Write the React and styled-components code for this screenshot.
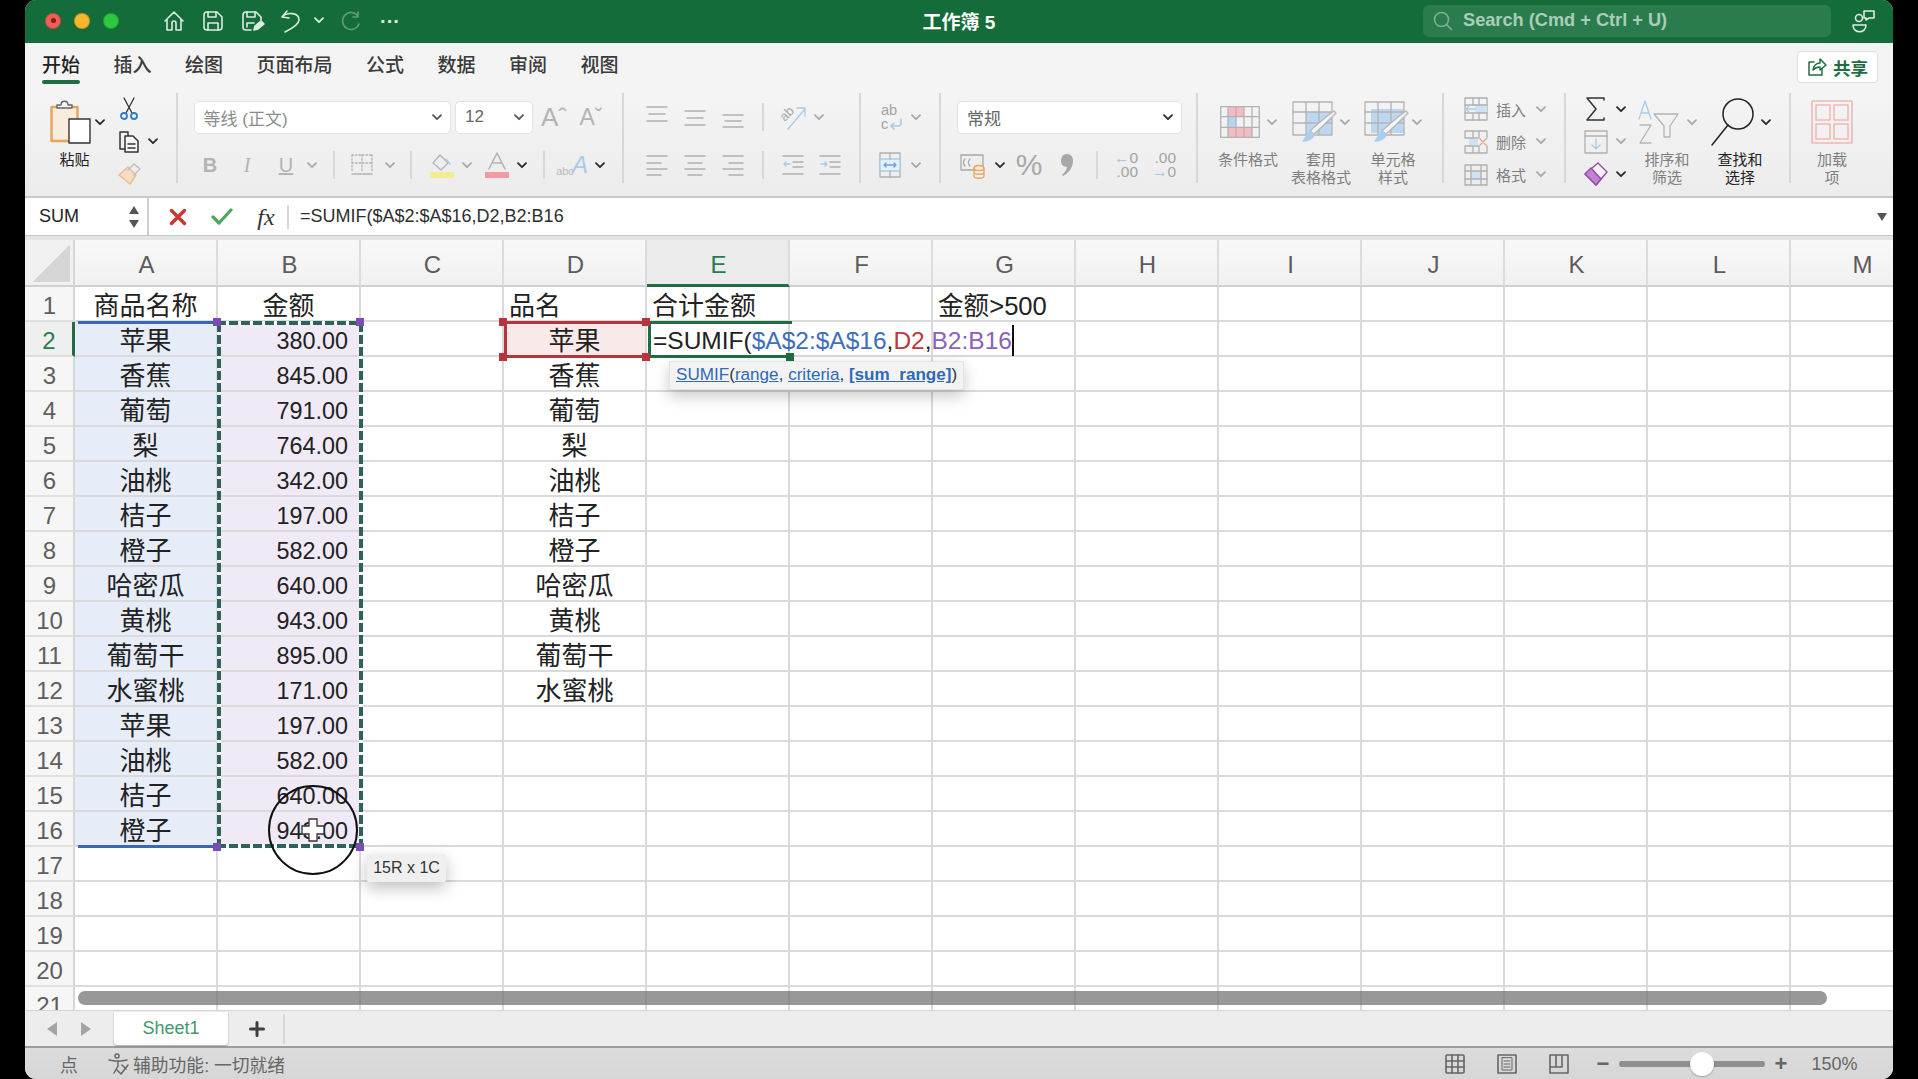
import React from "react";
import styled, { createGlobalStyle } from "styled-components";

const GlobalStyle = createGlobalStyle`
  html, body {
    margin: 0;
    background: #000;
    overflow: hidden;
    font-family: "Liberation Sans", "Noto Sans CJK SC", sans-serif;
  }
`;

const GREEN = "#1f6e43";
const GREY = "#b4b4b4";
const SOFTBLUE = "#a9cbe8";

const Window = styled.div`
  width: 1868px;
  height: 1079px;
  margin: 0 25px;
  border-radius: 11px;
  overflow: hidden;
  display: flex;
  flex-direction: column;
  background: #eee;
`;

const TitleBar = styled.div`
  height: 43px;
  flex: none;
  box-sizing: border-box;
  padding-bottom: 2px;
  background: #146c3a;
  color: #dcebe2;
  display: flex;
  align-items: center;
`;

const StripRow = styled.div`
  display: flex;
  align-items: center;
  height: 100%;
`;

const Slot = styled.div`
  flex: none;
  width: ${(p) => p.$w}px;
  margin-left: ${(p) => p.$ml}px;
  display: flex;
  align-items: center;
  justify-content: center;
`;

const Light = styled.span`
  width: 16px;
  height: 16px;
  border-radius: 50%;
  background: ${(p) => p.$c};
  border: 1px solid rgba(0, 0, 0, 0.18);
  box-sizing: border-box;
  display: flex;
  align-items: center;
  justify-content: center;
  &::after {
    content: "";
    width: 5px;
    height: 5px;
    border-radius: 50%;
    background: ${(p) => p.$dot || "transparent"};
  }
`;

const WindowTitle = styled.div`
  color: #fff;
  font-size: 19px;
  font-weight: 700;
  white-space: nowrap;
`;

const SearchBox = styled.div`
  width: 100%;
  height: 32px;
  border-radius: 6px;
  background: #2a7c4e;
  color: #a9cdb8;
  font-size: 18.2px;
  font-weight: 700;
  display: flex;
  align-items: center;
  gap: 10px;
  padding-left: 10px;
  box-sizing: border-box;
  white-space: nowrap;
`;

const TabRow = styled.div`
  height: 50px;
  flex: none;
  background: linear-gradient(#f3f3f3, #f4f4f4);
  display: flex;
  align-items: flex-start;
  gap: 33.5px;
  padding-left: 17px;
`;

const Tab = styled.div`
  position: relative;
  height: 44px;
  line-height: 46px;
  font-size: 19px;
  font-weight: 500;
  color: ${(p) => (p.$active ? "#222" : "#3a3a3a")};
  white-space: nowrap;
  ${(p) =>
    p.$active &&
    `&::after {
      content: "";
      position: absolute;
      left: 0;
      right: 0;
      top: 37px;
      height: 4px;
      border-radius: 2px;
      background: ${GREEN};
    }`}
`;

const ShareButton = styled.div`
  margin: 8px 15px 0 auto;
  width: 81px;
  height: 32px;
  background: #fff;
  border: 1px solid #dedede;
  border-radius: 4px;
  box-sizing: border-box;
  color: ${GREEN};
  font-size: 17.5px;
  font-weight: 700;
  display: flex;
  align-items: center;
  justify-content: center;
  gap: 6px;
`;

const Ribbon = styled.div`
  height: 105px;
  flex: none;
  box-sizing: border-box;
  background: linear-gradient(#f4f4f4, #ececec);
  border-bottom: 2px solid #c9c9c9;
  display: flex;
  align-items: flex-start;
`;

const Group = styled.div`
  flex: none;
  box-sizing: border-box;
  width: ${(p) => p.$w}px;
  height: 90px;
  border-right: ${(p) => (p.$last ? "none" : "2px solid #d8d8d8")};
  display: flex;
`;

const TwoRows = styled.div`
  display: grid;
  grid-template-rows: 48px 42px;
  width: 100%;
  & > div:last-child {
    box-sizing: border-box;
    padding-top: 6px;
  }
`;

const ThreeRows = styled.div`
  display: grid;
  grid-template-rows: 32px 33px 32px;
  flex: none;
  width: ${(p) => p.$w || "100%"};
`;

const BigTool = styled.div`
  flex: none;
  width: ${(p) => p.$w || 66}px;
  margin-left: ${(p) => p.$ml || 0}px;
  display: flex;
  flex-direction: column;
  align-items: center;
`;

const BigIcon = styled.div`
  height: 58px;
  flex: none;
  display: flex;
  align-items: center;
  gap: ${(p) => p.$gap || 7}px;
`;

const BigLabel = styled.div`
  font-size: 15px;
  line-height: 17.5px;
  text-align: center;
  white-space: nowrap;
  color: ${(p) => (p.$dark ? "#222" : "#7f7f7f")};
`;

const SmallLabel = styled.span`
  font-size: 15px;
  color: #7f7f7f;
  white-space: nowrap;
`;

const PasteBlock = styled.div`
  flex: none;
  width: 55px;
  margin-left: 25px;
  display: flex;
  flex-direction: column;
  & > ${BigLabel} {
    width: 49px;
  }
`;

const SelectBox = styled.div`
  width: 100%;
  height: 33px;
  box-sizing: border-box;
  background: #fff;
  border: 1px solid #e2e2e2;
  border-radius: 5px;
  padding: 0 8px 0 9px;
  display: flex;
  align-items: center;
  justify-content: space-between;
  font-size: 17px;
  color: ${(p) => p.$c || "#8c8c8c"};
  white-space: nowrap;
`;

const VBar = styled.span`
  width: 2px;
  height: ${(p) => p.$h || 28}px;
  background: #d8d8d8;
`;

const Glyph = styled.span`
  font-family: ${(p) => p.$serif ? '"Liberation Serif", serif' : '"Liberation Sans", sans-serif'};
  font-size: ${(p) => p.$s}px;
  font-weight: ${(p) => p.$b || 400};
  font-style: ${(p) => (p.$i ? "italic" : "normal")};
  text-decoration: ${(p) => (p.$u ? "underline" : "none")};
  color: ${(p) => p.$c || GREY};
  line-height: 1;
  white-space: nowrap;
`;

const DecimalStack = styled.span`
  display: flex;
  flex-direction: column;
  align-items: flex-end;
  font-size: 15.5px;
  line-height: 14px;
  color: #a4a4a4;
  white-space: nowrap;
  & b {
    font-weight: 400;
    color: #9cc2e4;
  }
`;

const AbcGlyph = styled.span`
  display: flex;
  align-items: flex-end;
  font-size: 11px;
  color: #b8b8b8;
  line-height: 1;
  & i {
    font-size: 24px;
    color: ${SOFTBLUE};
    margin-left: -2px;
  }
`;

const WrapGlyph = styled.span`
  display: flex;
  flex-direction: column;
  font-size: 14.5px;
  line-height: 14px;
  color: #a4a4a4;
  & > span {
    display: flex;
    align-items: center;
    gap: 1px;
  }
`;

const FormulaBar = styled.div`
  height: 37px;
  flex: none;
  background: #fff;
  display: flex;
  align-items: center;
  font-size: 18px;
  color: #2e2e2e;
`;

const NameBox = styled.div`
  width: 100%;
  display: flex;
  align-items: center;
  justify-content: space-between;
  padding: 0 7px 0 14px;
  box-sizing: border-box;
  height: 37px;
  border-right: 2px solid #cfcfcf;
  color: #222;
`;

const LineText = styled.span`
  width: 100%;
  white-space: nowrap;
  text-align: left;
`;

const GridGap = styled.div`
  height: 5px;
  flex: none;
  background: #e4e4e4;
  border-top: 1px solid #c6c6c6;
  box-sizing: border-box;
`;

const SheetView = styled.div`
  position: relative;
  height: 770px;
  flex: none;
  overflow: hidden;
  background: #fff;
`;

const SheetGrid = styled.div`
  display: grid;
  grid-template-columns: 50px repeat(13, 143px);
  grid-template-rows: 47px repeat(21, 35px);
  width: 1909px;
`;

const Corner = styled.div`
  background: #f1f1f1;
  border-right: 2px solid #d6d6d6;
  border-bottom: 2px solid #d0d0d0;
  box-sizing: border-box;
  display: flex;
  align-items: flex-end;
  justify-content: flex-end;
  padding: 0 3px 3px 0;
  &::after {
    content: "";
    width: 38px;
    height: 37px;
    background: linear-gradient(135deg, transparent 50%, #d6d6d6 50%);
  }
`;

const ColHead = styled.div`
  background: ${(p) => (p.$on ? "#ebebeb" : "linear-gradient(#f8f8f8, #f1f1f1)")};
  border-right: 2px solid #dcdcdc;
  border-bottom: ${(p) => (p.$on ? `3px solid ${GREEN}` : "2px solid #d0d0d0")};
  box-sizing: border-box;
  color: ${(p) => (p.$on ? "#2c7a52" : "#5c5c5c")};
  font-size: 24px;
  padding: 5px 0 0 2px;
  display: flex;
  align-items: center;
  justify-content: center;
`;

const RowHead = styled.div`
  background: ${(p) => (p.$on ? "#efefef" : "#f6f6f6")};
  border-right: ${(p) => (p.$on ? `3px solid ${GREEN}` : "2px solid #d6d6d6")};
  border-bottom: 2px solid #e0e0e0;
  box-sizing: border-box;
  color: ${(p) => (p.$on ? "#2c7a52" : "#5e5e5e")};
  font-size: 24px;
  padding: 4px 0 0 1px;
  display: flex;
  align-items: center;
  justify-content: center;
`;

const Cell = styled.div`
  background: ${(p) => p.$bg || "#fff"};
  border-right: 2px solid #dadada;
  border-bottom: 2px solid #dadada;
  box-sizing: border-box;
  font-size: ${(p) => p.$size || 26}px;
  font-weight: 400;
  color: #222;
  white-space: nowrap;
  padding: ${(p) => (p.$align === "flex-end" ? "6px 11px 0" : "0 5px 1px")};
  display: flex;
  align-items: center;
  justify-content: ${(p) => p.$align || "center"};
`;

const FormulaInput = styled.span`
  font-size: 24.5px;
  position: relative;
  z-index: 3;
  margin: 5px 0 0 1px;
  border-right: 2px solid #111;
  line-height: 31px;
  height: 31px;
  display: inline-block;
`;

const Ref = styled.span`
  color: ${(p) => p.$c};
`;

/* selection decorations that sit over the cells */
const Overlay = styled.div`
  position: absolute;
  left: ${(p) => p.$x}px;
  top: ${(p) => p.$y}px;
  width: ${(p) => p.$w}px;
  height: ${(p) => p.$h}px;
  box-sizing: border-box;
  pointer-events: none;
`;

const DASH = "#2d6358 0 9px, #fff 9px 12px";

const DashedRange = styled(Overlay)`
  background:
    repeating-linear-gradient(90deg, ${DASH}) top / 100% 4px no-repeat,
    repeating-linear-gradient(90deg, ${DASH}) bottom / 100% 4px no-repeat,
    repeating-linear-gradient(0deg, ${DASH}) left / 4px 100% no-repeat,
    repeating-linear-gradient(0deg, ${DASH}) right / 4px 100% no-repeat;
`;

const BlueRange = styled(Overlay)`
  border-top: 3px solid #3c66b6;
  border-bottom: 3px solid #3c66b6;
`;

const RedRange = styled(Overlay)`
  border: 3px solid #b5353f;
  border-right: none;
`;

const ActiveCell = styled(Overlay)`
  border-left: 3px solid ${GREEN};
  border-top: 3px solid ${GREEN};
  border-bottom: 3px solid ${GREEN};
`;

const Handle = styled(Overlay)`
  background: ${(p) => p.$c};
  z-index: 2;
`;

const FnTip = styled.div`
  position: absolute;
  left: 644px;
  top: 121px;
  height: 27px;
  padding: 0 6px;
  background: #f3f3f3;
  border: 1px solid #e3e3e3;
  border-radius: 2px;
  box-shadow: 0 6px 16px rgba(0, 0, 0, 0.22);
  font-size: 17.1px;
  line-height: 26px;
  color: #333;
  white-space: nowrap;
  z-index: 4;
  & u {
    color: #2f69b8;
  }
`;

const SizeTip = styled.div`
  position: absolute;
  left: 342px;
  top: 614px;
  width: 79px;
  height: 28px;
  background: #efefef;
  border-radius: 2px;
  box-shadow: 0 6px 16px rgba(0, 0, 0, 0.25);
  font-size: 16px;
  line-height: 28px;
  text-align: center;
  color: #333;
  z-index: 4;
`;

const CursorRing = styled.div`
  position: absolute;
  left: 243px;
  top: 545px;
  width: 90px;
  height: 90px;
  box-sizing: border-box;
  border: 2.5px solid #111;
  border-radius: 50%;
  display: flex;
  align-items: center;
  justify-content: center;
  z-index: 5;
`;

const ScrollThumb = styled.div`
  position: absolute;
  left: 53px;
  top: 751px;
  width: 1749px;
  height: 14px;
  border-radius: 7px;
  background: rgba(112, 112, 112, 0.72);
  z-index: 4;
`;

const SheetBar = styled.div`
  height: 38px;
  flex: none;
  box-sizing: border-box;
  background: #ededed;
  border-top: 1px solid #d6d6d6;
  border-bottom: 2px solid #9d9d9d;
`;

const SheetTab = styled.div`
  width: 114px;
  height: 33px;
  background: #fff;
  border-radius: 0 0 3px 3px;
  box-shadow: 0 1px 2px rgba(0, 0, 0, 0.3);
  color: #3f9a6d;
  font-size: 18px;
  display: flex;
  align-items: center;
  justify-content: center;
`;

const StatusBar = styled.div`
  height: 31px;
  flex: none;
  background: linear-gradient(#dcdcdc, #d6d6d6);
  color: #666;
  font-size: 17.8px;
`;

const ZoomTrack = styled.div`
  position: relative;
  width: 100%;
  height: 6px;
  border-radius: 3px;
  background: #8f8f8f;
`;

const ZoomKnob = styled.div`
  position: absolute;
  left: 71px;
  top: -9px;
  width: 24px;
  height: 24px;
  border-radius: 50%;
  background: #fff;
  box-shadow: 0 1px 2px rgba(0, 0, 0, 0.25);
`;

// lays its items out left to right so that each one is centred on its x
const Strip = ({ origin, items }) => {
  let cur = origin;
  return (
    <StripRow>
      {items.map(([x, w, el], i) => {
        const ml = x - w / 2 - cur;
        cur = x + w / 2;
        return (
          <Slot key={i} $w={w} $ml={ml}>
            {el}
          </Slot>
        );
      })}
    </StripRow>
  );
};

const Svg = ({ w, h = w, s = "currentColor", sw = 1.6, children }) => (
  <svg width={w} height={h} viewBox={`0 0 ${w} ${h}`} fill="none" stroke={s} strokeWidth={sw} strokeLinecap="round" strokeLinejoin="round">
    {children}
  </svg>
);

const Chev = ({ c = "#a8a8a8" }) => (
  <Svg w={10} h={7} s={c} sw={1.8}>
    <path d="M1 1.2 L5 5.2 L9 1.2" />
  </Svg>
);
const DarkChev = () => <Chev c="#2a2a2a" />;

const HomeIcon = () => (
  <Svg w={22}>
    <path d="M2 11 L11 2 L20 11 M4 9 V20 H9 V13 a2 2 0 0 1 4 0 V20 H18 V9" />
  </Svg>
);
const SaveIcon = () => (
  <Svg w={22}>
    <path d="M2 5 a3 3 0 0 1 3 -3 H15 L20 7 V17 a3 3 0 0 1 -3 3 H5 a3 3 0 0 1 -3 -3 Z" />
    <path d="M6 2 V7 H14 V2 M6 20 V13 H16 V20" />
  </Svg>
);
const SaveAsIcon = () => (
  <Svg w={24} h={22}>
    <path d="M10 20 H5 a3 3 0 0 1 -3 -3 V5 a3 3 0 0 1 3 -3 H15 L20 7 V10" />
    <path d="M6 2 V7 H14 V2 M6 17 V13 H13" />
    <path d="M13 20 L14 16 L20 11 L23 14 L17 19 Z" fill="#dcebe2" />
  </Svg>
);
const UndoIcon = () => (
  <Svg w={24}>
    <path d="M8 2 L3 8 L10 9 M3 8 C8 3 20 3 20 11 C20 15 14 19 6 23" />
  </Svg>
);
const RedoIcon = () => (
  <Svg w={22} s="#5f9c7b">
    <path d="M18 6 A8.5 8.5 0 1 0 19 14 M18 2 V7 H13" />
  </Svg>
);
const SearchIcon = ({ c = "#7fae93" }) => (
  <Svg w={20} s={c}>
    <circle cx="8.5" cy="8.5" r="7" />
    <path d="M13.5 13.5 L18.5 18.5" />
  </Svg>
);
const PeopleIcon = () => (
  <Svg w={26}>
    <circle cx="8" cy="10" r="3.5" />
    <path d="M2 17 H15 C15 26 2 26 2 17 Z" />
    <path d="M13 3 H23 V10 H18 L15 12 V10 H13 Z" />
  </Svg>
);

const PasteIcon = () => (
  <Svg w={42} h={44} s="#444" sw={1.4}>
    <rect x="1.5" y="7" width="26" height="34" fill="#f8ecdc" stroke="#e5a55f" strokeWidth="2.4" />
    <path d="M7 8 V5 H11 C11 0 18 0 18 5 H22 V8 Z" fill="#f4f4f4" stroke="#666" />
    <rect x="19" y="19" width="21" height="24" fill="#fff" stroke="#333" />
  </Svg>
);
const ScissorsIcon = () => (
  <Svg w={20} h={24} s="#333" sw={1.3}>
    <path d="M5 1 L13 16 M15 1 L7 16" />
    <circle cx="5" cy="19" r="3" stroke="#2f7cc4" strokeWidth="1.8" />
    <circle cx="15" cy="19" r="3" stroke="#2f7cc4" strokeWidth="1.8" />
  </Svg>
);
const CopyIcon = () => (
  <Svg w={24} s="#333" sw={1.5}>
    <path d="M8 19 H3 V2 H11 V6" />
    <path d="M8 6 H16 L21 11 V22 H8 Z" fill="#f8f8f8" />
    <path d="M11 14 H18 M11 18 H18" />
  </Svg>
);
const BrushIcon = () => (
  <Svg w={24} s="#bcbcbc" sw={1.4}>
    <path d="M1 13 L10 5 L18 13 L12 22 Z" fill="#f5dcc3" stroke="#e6bd95" />
    <path d="M10 8 L16 2 L22 7 L16 13" />
  </Svg>
);
const BordersIcon = () => (
  <Svg w={24} s={GREY} sw={1.3}>
    <path d="M2 2 H22 M2 2 V18 M22 2 V18 M12 2 V18 M2 10 H22" strokeDasharray="1.5 2" />
    <path d="M2 21 H22" />
  </Svg>
);
const FillIcon = () => (
  <Svg w={26} h={26} s={GREY} sw={1.4}>
    <path d="M4 11 L11 3 L19 11 L12 18 Z" />
    <path d="M17 7 L21 12" stroke={SOFTBLUE} />
    <rect x="1" y="20" width="24" height="6" fill="#f4ec8f" stroke="none" />
  </Svg>
);
const FontColorIcon = () => (
  <Svg w={24} h={28}>
    <rect x="0" y="21" width="24" height="6" fill="#f29aa2" stroke="none" />
    <path d="M4 18 L12 2 L20 18 M7 12 H17" stroke={GREY} />
  </Svg>
);
const Lines = ({ rows, w = 22, h = 24 }) => (
  <Svg w={w} h={h} s="#b0b0b0" sw={1.5}>
    {rows.map(([y, a, b], i) => (
      <path key={i} d={`M${a} ${y} H${b}`} />
    ))}
  </Svg>
);
const OrientIcon = () => (
  <Svg w={28} s={GREY} sw={1.3}>
    <text x="8" y="15" textAnchor="middle" transform="rotate(-45 8 11)" fontSize="13" fill="#a8a8a8" stroke="none">ab</text>
    <path d="M9 26 L26 6 M18 5 H26 V13" stroke={SOFTBLUE} />
  </Svg>
);
const IndentIcon = ({ rev }) => (
  <Svg w={22} s="#b0b0b0" sw={1.5}>
    <path d="M1 2 H21 M11 8 H21 M11 13 H21 M1 20 H21" />
    <path d={rev ? "M8 10 H2 M4 8 L2 10 L4 12" : "M2 10 H8 M6 8 L8 10 L6 12"} stroke={SOFTBLUE} />
  </Svg>
);
const WrapArrow = () => (
  <Svg w={14} h={12} s={SOFTBLUE} sw={1.6}>
    <path d="M2 8 H9 a3 3 0 0 0 3 -3 V1 M5 5 L2 8 L5 11" />
  </Svg>
);
const MergeIcon = () => (
  <Svg w={24} h={28} s="#b0b0b0" sw={1.3}>
    <rect x="2" y="2" width="20" height="24" />
    <rect x="2" y="8" width="20" height="12" fill="#e6f0f9" stroke={SOFTBLUE} />
    <path d="M6 14 H18 M8 12 L6 14 L8 16 M16 12 L18 14 L16 16" stroke="#6aa4d8" />
    <path d="M12 2 V8 M12 20 V26" />
  </Svg>
);
const CurrencyIcon = () => (
  <Svg w={28} h={28} s="#a8a8a8" sw={1.3}>
    <rect x="1" y="4" width="22" height="15" />
    <path d="M5 8 C3 10 3 13 5 15 M10 8 C8 10 8 13 10 15" />
    <ellipse cx="19" cy="17" rx="5" ry="2.5" stroke="#eda35c" fill="#f9ead9" />
    <path d="M14 17 V25 C14 28 24 28 24 25 V17 M14 21 C14 24 24 24 24 21" stroke="#eda35c" />
  </Svg>
);
const CommaIcon = () => (
  <svg width="14" height="24" viewBox="0 0 14 24" fill="#a8a8a8">
    <path d="M7 1 C11 1 13 4 13 8 C13 14 9 20 3 23 L2 22 C5 19 7 16 7 14 C3 14 1 11 1 8 C1 4 3 1 7 1 Z" />
  </svg>
);

const Table = ({ w = 40, h = 32, cols, rows, fills }) => {
  const cw = w / cols;
  const ch = h / rows;
  return (
    <Svg w={w} h={h} s="#b2b2b2" sw={1.3}>
      {fills.map(([c, r, cs, rs, f], i) => (
        <rect key={i} x={c * cw} y={r * ch} width={cs * cw} height={rs * ch} fill={f} stroke="none" />
      ))}
      {Array.from({ length: cols + 1 }, (_, i) => (
        <path key={i} d={`M${Math.max(0.7, Math.min(w - 0.7, i * cw))} 0 V${h}`} />
      ))}
      {Array.from({ length: rows + 1 }, (_, i) => (
        <path key={i} d={`M0 ${Math.max(0.7, Math.min(h - 0.7, i * ch))} H${w}`} />
      ))}
    </Svg>
  );
};

const CondIcon = () => (
  <Table cols={5} rows={3} fills={[[1, 0, 2, 1, "#f5b9c2"], [1, 1, 1, 1, "#b6d5f0"], [2, 1, 1, 1, "#f0f0f0"], [1, 2, 3, 1, "#f5b9c2"]]} />
);
const TableStyleIcon = ({ head }) => (
  <Svg w={46} h={42} s="#b2b2b2" sw={1.3}>
    {head ? <rect x="7" y="8" width="33" height="24" fill="#bcd8f0" stroke="none" /> : <rect x="14" y="11" width="26" height="22" fill="#bcd8f0" stroke="none" />}
    <path d="M1 1 H40 V34 H1 Z M1 11 H40 M1 22 H40 M14 1 V34 M27 1 V34" />
    <path d="M44 12 C36 20 28 28 22 33 L18 30 C24 24 34 16 42 10 Z" fill="#f5f5f5" stroke="#b6b6b6" />
    <path d="M18 30 C14 32 12 38 10 41 C16 41 22 38 23 33 Z" fill="#a9cfee" stroke="none" />
  </Svg>
);
const CellInsertIcon = () => (
  <Svg w={24} s="#b0b0b0" sw={1.3}>
    <rect x="1" y="1" width="22" height="22" />
    <rect x="11" y="8" width="12" height="8" fill="#cfe2f4" stroke="none" />
    <path d="M1 8 H23 M1 16 H23 M9 1 V8 M15 1 V8 M9 16 V23 M15 16 V23" />
    <path d="M2 12 H11 M5 9 L2 12 L5 15" stroke={SOFTBLUE} />
  </Svg>
);
const CellDeleteIcon = () => (
  <Svg w={24} s="#b0b0b0" sw={1.3}>
    <path d="M1 8 V1 H23 V8 M1 16 V23 H23 V16 M9 1 V8 M15 1 V8 M9 16 V23 M15 16 V23 M1 8 H14 M1 16 H14" />
    <rect x="5" y="9" width="9" height="6" fill="#cfe2f4" stroke="none" />
    <path d="M16 9 L22 15 M22 9 L16 15" stroke="#ef9b9b" />
  </Svg>
);
const CellFormatIcon = () => (
  <Svg w={24} s="#b0b0b0" sw={1.3}>
    <rect x="1" y="3" width="22" height="20" />
    <rect x="7" y="9" width="10" height="8" fill="#cfe2f4" stroke="none" />
    <path d="M1 9 H23 M1 17 H23 M7 3 V23 M17 3 V23" />
  </Svg>
);
const SigmaIcon = () => (
  <Svg w={20} h={24} s="#333" sw={1.5}>
    <path d="M18 3 V1 H1 L10 12 L1 23 H18 V21" />
  </Svg>
);
const DownFillIcon = () => (
  <Svg w={24} s="#b0b0b0" sw={1.3}>
    <rect x="1" y="1" width="22" height="22" />
    <path d="M1 6 H23" />
    <path d="M12 9 V19 M8 15 L12 19 L16 15" stroke={SOFTBLUE} />
  </Svg>
);
const EraserIcon = () => (
  <Svg w={26} s="#8a4f9e" sw={1.4}>
    <path d="M2 13 L9 20 L13 24 L24 11 L15 2 Z" fill="#f8f1fb" />
    <path d="M2 13 L13 24 L18 18 L8 7 Z" fill="#c67fd8" />
  </Svg>
);
const SortIcon = () => (
  <Svg w={42} h={44} s={GREY} sw={1.3}>
    <path d="M1 19 L7 1 L13 19 M3 13 H11" stroke={SOFTBLUE} />
    <path d="M2 25 H13 L2 43 H13" />
    <path d="M16 14 H40 L32 26 V37 H26 V26 Z" />
  </Svg>
);
const FindIcon = () => (
  <Svg w={44} h={48} s="#222" sw={1.5}>
    <circle cx="28" cy="16" r="15" />
    <path d="M18 27 L2 47" />
  </Svg>
);
const AddInIcon = () => (
  <Svg w={42} h={44} s="#efb9b3" sw={1.6}>
    <rect x="1" y="1" width="40" height="42" />
    <rect x="5" y="5" width="14" height="15" />
    <rect x="23" y="5" width="14" height="15" />
    <rect x="5" y="24" width="14" height="15" />
    <rect x="23" y="24" width="14" height="15" />
  </Svg>
);
const ShareIcon = () => (
  <Svg w={20} s={GREEN} sw={1.5}>
    <path d="M7 5 H2 V18 H15 V12" />
    <path d="M6 13 C7 8 10 6 13 6 V2 L19 8 L13 13 V10 C10 10 8 11 6 13 Z" />
  </Svg>
);
const CrossMark = () => (
  <Svg w={18} s="#c8382f" sw={3.4}>
    <path d="M2.5 2.5 L15.5 15.5 M15.5 2.5 L2.5 15.5" />
  </Svg>
);
const CheckMark = () => (
  <Svg w={22} h={18} s="#4aa85c" sw={3.2}>
    <path d="M2 9 L8 15 L20 2" />
  </Svg>
);
const Stepper = () => (
  <svg width="12" height="24" viewBox="0 0 12 24" fill="#555">
    <path d="M6 1 L11 9 H1 Z M6 23 L11 15 H1 Z" />
  </svg>
);
const DownMark = () => (
  <svg width="12" height="10" viewBox="0 0 12 10" fill="#555">
    <path d="M1 1 H11 L6 9 Z" />
  </svg>
);
const PlusCursor = () => (
  <svg width="26" height="26" viewBox="0 0 26 26" fill="#fff" stroke="#333" strokeWidth="1.3">
    <path d="M9 2 H17 V9 H24 V17 H17 V24 H9 V17 H2 V9 H9 Z" />
  </svg>
);
const Tri = ({ left }) => (
  <svg width="12" height="16" viewBox="0 0 12 16" fill="#a4a4a4">
    <path d={left ? "M11 1 V15 L1 8 Z" : "M1 1 V15 L11 8 Z"} />
  </svg>
);
const PlusMark = () => (
  <Svg w={16} s="#3f3f3f" sw={3}>
    <path d="M8 1.5 V14.5 M1.5 8 H14.5" />
  </Svg>
);
const AccessIcon = () => (
  <Svg w={22} s="#666" sw={1.5}>
    <circle cx="10" cy="3" r="2" />
    <path d="M2 7 L8 8 H14 L20 7 M11 8 V13 L7 20 M15 12 L19 16 M10 17 L14 21 L21 12" />
  </Svg>
);
const NormalViewIcon = () => (
  <Svg w={20} s="#666" sw={1.6}>
    <rect x="1" y="1" width="18" height="18" rx="1" />
    <path d="M1 7 H19 M1 13 H19 M7 1 V19 M13 1 V19" />
  </Svg>
);
const PageViewIcon = () => (
  <Svg w={20} s="#666" sw={1.6}>
    <rect x="1" y="1" width="18" height="18" />
    <path d="M5 4 V16 H15 V4 Z M7 7 H13 M7 10 H13 M7 13 H13" strokeWidth="1" />
  </Svg>
);
const BreakViewIcon = () => (
  <Svg w={20} s="#666" sw={1.6}>
    <path d="M1 1 H19 V19 H1 Z M1 13 H13 V1 M7 1 V13" />
  </Svg>
);

const COLS = ["A", "B", "C", "D", "E", "F", "G", "H", "I", "J", "K", "L", "M"];
const ITEMS = ["苹果", "香蕉", "葡萄", "梨", "油桃", "桔子", "橙子", "哈密瓜", "黄桃", "葡萄干", "水蜜桃", "苹果", "油桃", "桔子", "橙子"];
const AMOUNTS = [380, 845, 791, 764, 342, 197, 582, 640, 943, 895, 171, 197, 582, 640, 943];
const TABS = ["开始", "插入", "绘图", "页面布局", "公式", "数据", "审阅", "视图"];

const colX = (i) => 50 + 143 * i;
const rowY = (n) => 47 + 35 * (n - 1);

const cellFor = (r, c) => {
  if (r === 1) {
    if (c === 0) return { text: "商品名称" };
    if (c === 1) return { text: "金额" };
    if (c === 3) return { text: "品名", $align: "flex-start" };
    if (c === 4) return { text: "合计金额", $align: "flex-start" };
    if (c === 6) return { text: "金额>500", $align: "flex-start", $size: 25.6 };
    return {};
  }
  const idx = r - 2;
  if (c === 0 && idx < 15) return { text: ITEMS[idx], $bg: "#e6ecf8" };
  if (c === 1 && idx < 15) return { text: `${AMOUNTS[idx]}.00`, $bg: "#f0eaf7", $align: "flex-end", $size: 23.4 };
  if (c === 3 && idx < 11) return { text: ITEMS[idx], $bg: idx === 0 ? "#fae9e9" : undefined };
  return {};
};

const handles = [
  [217, 322, "#7b4bb6"], [360, 322, "#7b4bb6"], [217, 847, "#7b4bb6"], [360, 847, "#7b4bb6"],
  [503, 322, "#b5353f"], [646, 322, "#b5353f"], [503, 357, "#b5353f"], [646, 357, "#b5353f"],
  [790, 357, GREEN],
];

const App = () => {
  return (
    <Window>
      <GlobalStyle />
      <TitleBar>
        <Strip
          origin={25}
          items={[
            [53, 16, <Light $c="#ee5f57" $dot="#8c1a14" />],
            [82, 16, <Light $c="#f8b62d" />],
            [111, 16, <Light $c="#2bc840" />],
            [174, 22, <HomeIcon />],
            [213, 22, <SaveIcon />],
            [253, 24, <SaveAsIcon />],
            [291, 24, <UndoIcon />],
            [319, 10, <Chev c="#dcebe2" />],
            [351, 22, <RedoIcon />],
            [390, 20, <Glyph $s={20} $b={700} $c="#dcebe2">···</Glyph>],
            [959, 80, <WindowTitle>工作簿 5</WindowTitle>],
            [1627, 408, <SearchBox><SearchIcon />Search (Cmd + Ctrl + U)</SearchBox>],
            [1864, 26, <PeopleIcon />],
          ]}
        />
      </TitleBar>

      <TabRow>
        {TABS.map((t, i) => (
          <Tab key={t} $active={i === 0}>{t}</Tab>
        ))}
        <ShareButton><ShareIcon />共享</ShareButton>
      </TabRow>

      <Ribbon>
        <Group $w={153}>
          <PasteBlock>
            <BigIcon $gap={3}>
              <PasteIcon />
              <DarkChev />
            </BigIcon>
            <BigLabel $dark>粘贴</BigLabel>
          </PasteBlock>
          <ThreeRows $w="73px">
            <Strip origin={105} items={[[129, 20, <ScissorsIcon />]]} />
            <Strip origin={105} items={[[129, 24, <CopyIcon />], [153, 10, <DarkChev />]]} />
            <Strip origin={105} items={[[130, 24, <BrushIcon />]]} />
          </ThreeRows>
        </Group>

        <Group $w={446}>
          <TwoRows>
            <Strip
              origin={178}
              items={[
                [322, 257, <SelectBox>等线 (正文)<Chev c="#555" /></SelectBox>],
                [494, 78, <SelectBox $c="#666">12<Chev c="#555" /></SelectBox>],
                [554, 30, <Glyph $s={26}>Aˆ</Glyph>],
                [591, 28, <Glyph $s={23}>Aˇ</Glyph>],
              ]}
            />
            <Strip
              origin={178}
              items={[
                [210, 20, <Glyph $s={20} $b={700}>B</Glyph>],
                [247, 20, <Glyph $s={20} $serif $i>I</Glyph>],
                [286, 20, <Glyph $s={20} $u>U</Glyph>],
                [312, 10, <Chev />],
                [334, 2, <VBar />],
                [362, 24, <BordersIcon />],
                [390, 10, <Chev />],
                [411, 2, <VBar />],
                [442, 26, <FillIcon />],
                [467, 10, <Chev />],
                [497, 24, <FontColorIcon />],
                [522, 10, <DarkChev />],
                [544, 2, <VBar />],
                [572, 28, <AbcGlyph>abc<i>A</i></AbcGlyph>],
                [600, 10, <DarkChev />],
              ]}
            />
          </TwoRows>
        </Group>

        <Group $w={237}>
          <TwoRows>
            <Strip
              origin={624}
              items={[
                [657, 22, <Lines rows={[[2, 1, 21], [9, 3, 19], [16, 1, 21]]} />],
                [695, 22, <Lines rows={[[6, 1, 21], [13, 3, 19], [20, 1, 21]]} />],
                [733, 22, <Lines rows={[[10, 1, 21], [16, 3, 19], [22, 1, 21]]} />],
                [763, 2, <VBar />],
                [793, 28, <OrientIcon />],
                [819, 10, <Chev />],
              ]}
            />
            <Strip
              origin={624}
              items={[
                [657, 22, <Lines rows={[[3, 1, 21], [10, 1, 15], [16, 1, 21], [22, 1, 15]]} />],
                [695, 22, <Lines rows={[[3, 1, 21], [10, 4, 18], [16, 1, 21], [22, 4, 18]]} />],
                [733, 22, <Lines rows={[[3, 1, 21], [10, 7, 21], [16, 1, 21], [22, 7, 21]]} />],
                [763, 2, <VBar />],
                [793, 22, <IndentIcon rev />],
                [830, 22, <IndentIcon />],
              ]}
            />
          </TwoRows>
        </Group>

        <Group $w={80}>
          <TwoRows>
            <Strip
              origin={861}
              items={[
                [892, 24, <WrapGlyph>ab<span>c<WrapArrow /></span></WrapGlyph>],
                [916, 10, <Chev />],
              ]}
            />
            <Strip origin={861} items={[[890, 24, <MergeIcon />], [916, 10, <Chev />]]} />
          </TwoRows>
        </Group>

        <Group $w={257}>
          <TwoRows>
            <Strip origin={941} items={[[1069.5, 225, <SelectBox $c="#666">常规<DarkChev /></SelectBox>]]} />
            <Strip
              origin={941}
              items={[
                [974, 28, <CurrencyIcon />],
                [1000, 10, <DarkChev />],
                [1029, 28, <Glyph $s={30} $c="#a8a8a8">%</Glyph>],
                [1067, 16, <CommaIcon />],
                [1097, 2, <VBar />],
                [1126, 28, <DecimalStack><span><b>←</b>0</span><span>.00</span></DecimalStack>],
                [1164, 28, <DecimalStack><span>.00</span><span><b>→</b>0</span></DecimalStack>],
              ]}
            />
          </TwoRows>
        </Group>

        <Group $w={246}>
          <BigTool $ml={17}>
            <BigIcon><CondIcon /><Chev /></BigIcon>
            <BigLabel>条件格式</BigLabel>
          </BigTool>
          <BigTool $ml={7}>
            <BigIcon $gap={2}><TableStyleIcon /><Chev /></BigIcon>
            <BigLabel>套用<br />表格格式</BigLabel>
          </BigTool>
          <BigTool $ml={6}>
            <BigIcon $gap={2}><TableStyleIcon head /><Chev /></BigIcon>
            <BigLabel>单元格<br />样式</BigLabel>
          </BigTool>
        </Group>

        <Group $w={122}>
          <ThreeRows>
            <Strip origin={1444} items={[[1476, 24, <CellInsertIcon />], [1511, 34, <SmallLabel>插入</SmallLabel>], [1541, 10, <Chev />]]} />
            <Strip origin={1444} items={[[1476, 24, <CellDeleteIcon />], [1511, 34, <SmallLabel>删除</SmallLabel>], [1541, 10, <Chev />]]} />
            <Strip origin={1444} items={[[1476, 24, <CellFormatIcon />], [1511, 34, <SmallLabel>格式</SmallLabel>], [1541, 10, <Chev />]]} />
          </ThreeRows>
        </Group>

        <Group $w={225}>
          <ThreeRows $w="65px">
            <Strip origin={1566} items={[[1596, 20, <SigmaIcon />], [1621, 10, <DarkChev />]]} />
            <Strip origin={1566} items={[[1596, 24, <DownFillIcon />], [1621, 10, <Chev />]]} />
            <Strip origin={1566} items={[[1596, 26, <EraserIcon />], [1621, 10, <DarkChev />]]} />
          </ThreeRows>
          <BigTool $ml={5} $w={62}>
            <BigIcon><SortIcon /><Chev /></BigIcon>
            <BigLabel>排序和<br />筛选</BigLabel>
          </BigTool>
          <BigTool $ml={11} $w={62}>
            <BigIcon><FindIcon /><DarkChev /></BigIcon>
            <BigLabel $dark>查找和<br />选择</BigLabel>
          </BigTool>
        </Group>

        <Group $w={102} $last>
          <BigTool $ml={11} $w={60}>
            <BigIcon><AddInIcon /></BigIcon>
            <BigLabel>加载<br />项</BigLabel>
          </BigTool>
        </Group>
      </Ribbon>

      <FormulaBar>
        <Strip
          origin={25}
          items={[
            [87, 124, <NameBox>SUM<Stepper /></NameBox>],
            [178, 18, <CrossMark />],
            [222, 22, <CheckMark />],
            [266, 26, <Glyph $s={24} $serif $i $c="#333">fx</Glyph>],
            [288, 2, <VBar $h={24} />],
            [433, 266, <LineText>=SUMIF($A$2:$A$16,D2,B2:B16</LineText>],
            [1882, 12, <DownMark />],
          ]}
        />
      </FormulaBar>
      <GridGap />

      <SheetView>
        <SheetGrid>
          <Corner />
          {COLS.map((c) => (
            <ColHead key={c} $on={c === "E"}>{c}</ColHead>
          ))}
          {Array.from({ length: 21 }, (_, i) => i + 1).map((r) => (
            <React.Fragment key={r}>
              <RowHead $on={r === 2}>{r}</RowHead>
              {COLS.map((c, ci) => {
                if (r === 2 && ci === 4) {
                  return (
                    <Cell key={c} $align="flex-start">
                      <FormulaInput>
                        =SUMIF(<Ref $c="#3d6fb9">$A$2:$A$16</Ref>,<Ref $c="#bf3540">D2</Ref>,<Ref $c="#8a63b8">B2:B16</Ref>
                      </FormulaInput>
                    </Cell>
                  );
                }
                const { text, ...rest } = cellFor(r, ci);
                return <Cell key={c} {...rest}>{text}</Cell>;
              })}
            </React.Fragment>
          ))}
        </SheetGrid>

        <BlueRange $x={colX(0) + 3} $y={rowY(2) - 1} $w={139} $h={527} />
        <DashedRange $x={colX(1) - 1} $y={rowY(2) - 1} $w={146} $h={527} />
        <RedRange $x={colX(3)} $y={rowY(2) - 1} $w={143} $h={37} />
        <ActiveCell $x={colX(4) + 1} $y={rowY(2) - 1} $w={144} $h={37} />
        {handles.map(([x, y, c], i) => (
          <Handle key={i} $x={x - 25 - 4} $y={y - 240 - 4} $w={8} $h={8} $c={c} />
        ))}

        <FnTip>
          <u>SUMIF</u>(<u>range</u>, <u>criteria</u>, <u><b>[sum_range]</b></u>)
        </FnTip>
        <SizeTip>15R x 1C</SizeTip>
        <CursorRing><PlusCursor /></CursorRing>
        <ScrollThumb />
      </SheetView>

      <SheetBar>
        <Strip
          origin={25}
          items={[
            [52, 12, <Tri left />],
            [86, 12, <Tri />],
            [171, 114, <SheetTab>Sheet1</SheetTab>],
            [257, 16, <PlusMark />],
            [284, 2, <VBar $h={30} />],
          ]}
        />
      </SheetBar>

      <StatusBar>
        <Strip
          origin={25}
          items={[
            [69, 20, <span>点</span>],
            [118, 22, <AccessIcon />],
            [211, 156, <LineText>辅助功能: 一切就绪</LineText>],
            [1455, 20, <NormalViewIcon />],
            [1507, 20, <PageViewIcon />],
            [1559, 20, <BreakViewIcon />],
            [1603, 12, <Glyph $s={22} $b={700} $c="#666">−</Glyph>],
            [1692, 146, <ZoomTrack><ZoomKnob /></ZoomTrack>],
            [1781, 14, <Glyph $s={22} $b={700} $c="#666">+</Glyph>],
            [1834.5, 46, <Glyph $s={18} $c="#666">150%</Glyph>],
          ]}
        />
      </StatusBar>
    </Window>
  );
};

export default App;
